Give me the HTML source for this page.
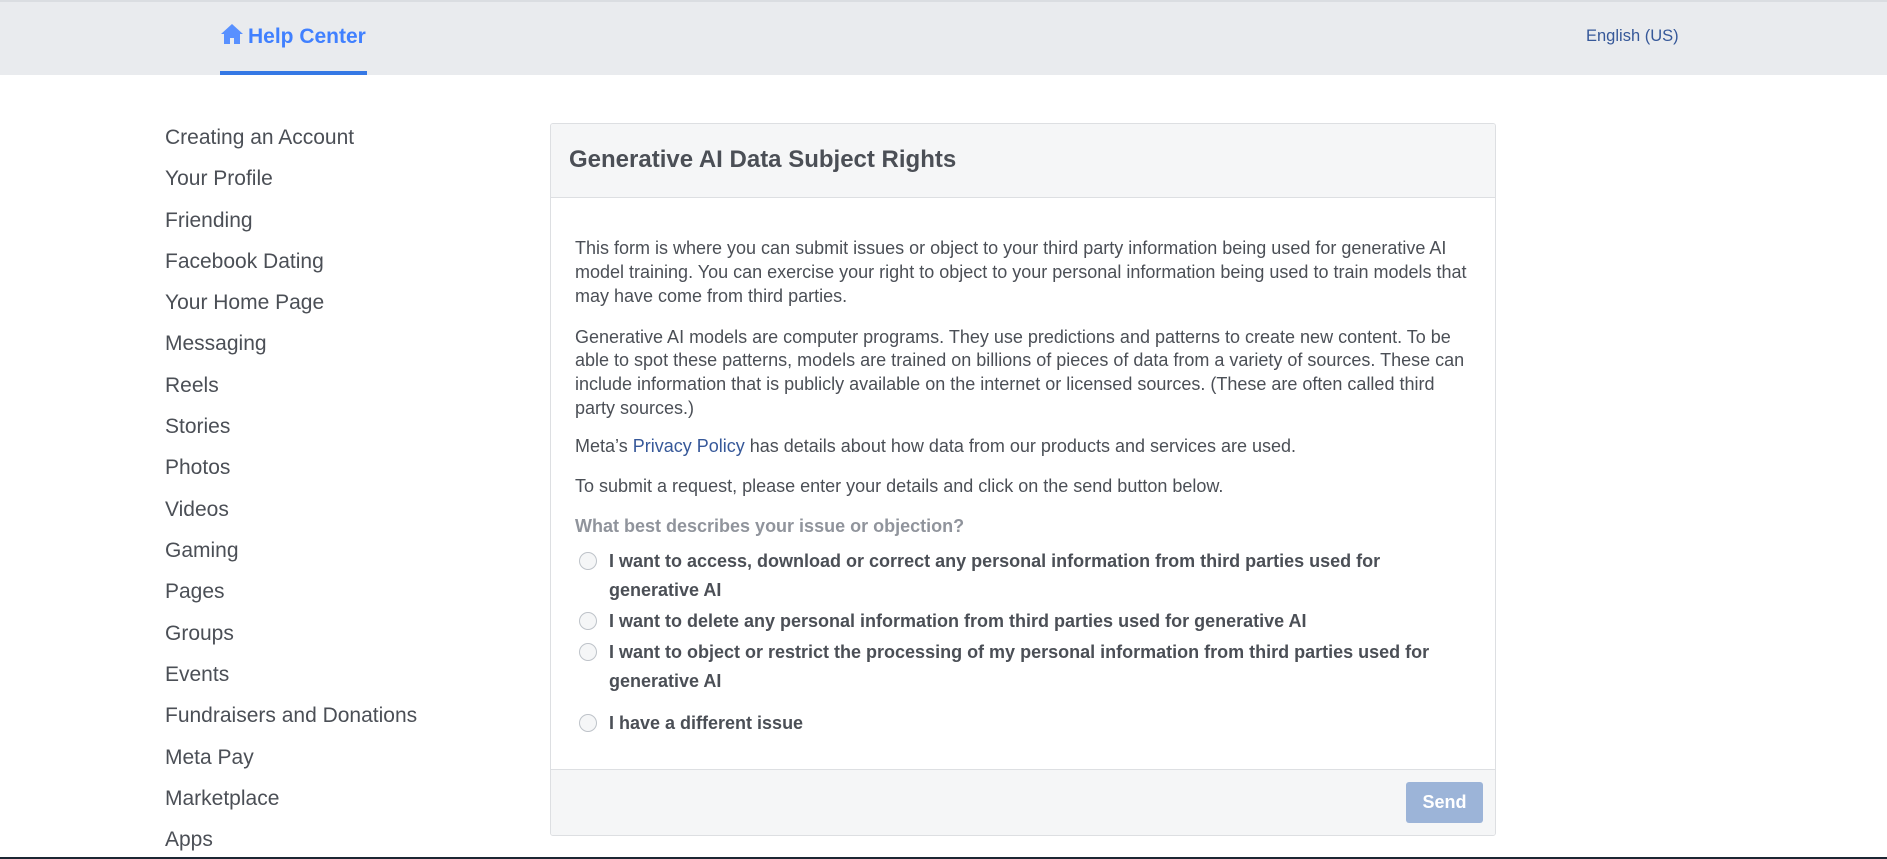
<!DOCTYPE html>
<html><head><meta charset="utf-8"><style>
*{margin:0;padding:0;box-sizing:border-box}
body{width:1887px;height:859px;overflow:hidden;background:#fff;font-family:"Liberation Sans",Arial,sans-serif;color:#4b4f56;position:relative}
.hdr{position:absolute;left:0;top:0;width:1887px;height:75px;background:#e9ebee;border-top:2px solid #dadde1}
.hc{position:absolute;left:220px;top:23px;font-size:21px;font-weight:bold;color:#4080ff;white-space:nowrap}
.ul{position:absolute;left:220px;top:71px;width:147px;height:4px;background:#3578e5}
.lang{position:absolute;left:1586px;top:27px;font-size:16.5px;color:#365899}
.side{position:absolute;left:165px;font-size:21px;color:#4b4f56;white-space:nowrap;line-height:24px}
.card{position:absolute;left:550px;top:123px;width:946px;height:713px;border:1px solid #dddfe2;border-radius:3px;overflow:hidden}
.ch{height:74px;background:#f5f6f7;border-bottom:1px solid #dddfe2;padding:22px 18px;font-size:24px;font-weight:bold;color:#4b4f56}
.cf{position:absolute;left:0;bottom:0;width:100%;height:66px;background:#f5f6f7;border-top:1px solid #dddfe2}
.send{position:absolute;right:12px;top:12px;width:77px;height:41px;background:#9cb4d8;border-radius:3px;color:#fff;font-weight:bold;font-size:18px;text-align:center;line-height:41px}
.t{position:absolute;font-size:18px;line-height:24px;white-space:nowrap;color:#4b4f56}
.b{font-weight:bold}
.q{color:#90949c;font-weight:bold}
.r{position:absolute;left:579px;width:18px;height:18px;border:1px solid #bec3c9;border-radius:50%;background:#f5f6f7}
a{color:#365899;text-decoration:none}
.bot{position:absolute;left:0;top:857px;width:1887px;height:2px;background:#1c2733}
</style></head><body>
<div class="hdr"></div>
<div class="hc"><svg width="24" height="22" viewBox="0 0 24 22" style="vertical-align:-2px;margin-right:4px"><path d="M12 1 L1 11 H4 V21 H10 V15 H14 V21 H20 V11 H23 Z" fill="#5890ff"/></svg>Help Center</div>
<div class="ul"></div>
<div class="lang">English (US)</div>

<div class="side" style="top:126px">Creating an Account</div>
<div class="side" style="top:167px">Your Profile</div>
<div class="side" style="top:209px">Friending</div>
<div class="side" style="top:250px">Facebook Dating</div>
<div class="side" style="top:291px">Your Home Page</div>
<div class="side" style="top:332px">Messaging</div>
<div class="side" style="top:374px">Reels</div>
<div class="side" style="top:415px">Stories</div>
<div class="side" style="top:456px">Photos</div>
<div class="side" style="top:498px">Videos</div>
<div class="side" style="top:539px">Gaming</div>
<div class="side" style="top:580px">Pages</div>
<div class="side" style="top:622px">Groups</div>
<div class="side" style="top:663px">Events</div>
<div class="side" style="top:704px">Fundraisers and Donations</div>
<div class="side" style="top:746px">Meta Pay</div>
<div class="side" style="top:787px">Marketplace</div>
<div class="side" style="top:828px">Apps</div>

<div class="card">
<div class="ch">Generative AI Data Subject Rights</div>
<div class="cf"><div class="send">Send</div></div>
</div>

<div class="t" style="left:575px;top:236px">This form is where you can submit issues or object to your third party information being used for generative AI</div>
<div class="t" style="left:575px;top:260px">model training. You can exercise your right to object to your personal information being used to train models that</div>
<div class="t" style="left:575px;top:284px">may have come from third parties.</div>
<div class="t" style="left:575px;top:325px">Generative AI models are computer programs. They use predictions and patterns to create new content. To be</div>
<div class="t" style="left:575px;top:348px">able to spot these patterns, models are trained on billions of pieces of data from a variety of sources. These can</div>
<div class="t" style="left:575px;top:372px">include information that is publicly available on the internet or licensed sources. (These are often called third</div>
<div class="t" style="left:575px;top:396px">party sources.)</div>
<div class="t" style="left:575px;top:434px">Meta’s <a>Privacy Policy</a> has details about how data from our products and services are used.</div>
<div class="t" style="left:575px;top:474px">To submit a request, please enter your details and click on the send button below.</div>
<div class="t q" style="left:575px;top:514px">What best describes your issue or objection?</div>
<div class="r" style="top:552px"></div>
<div class="t b" style="left:609px;top:549px">I want to access, download or correct any personal information from third parties used for</div>
<div class="t b" style="left:609px;top:578px">generative AI</div>
<div class="r" style="top:612px"></div>
<div class="t b" style="left:609px;top:609px">I want to delete any personal information from third parties used for generative AI</div>
<div class="r" style="top:643px"></div>
<div class="t b" style="left:609px;top:640px">I want to object or restrict the processing of my personal information from third parties used for</div>
<div class="t b" style="left:609px;top:669px">generative AI</div>
<div class="r" style="top:714px"></div>
<div class="t b" style="left:609px;top:711px">I have a different issue</div>
<div class="bot"></div>
</body></html>
